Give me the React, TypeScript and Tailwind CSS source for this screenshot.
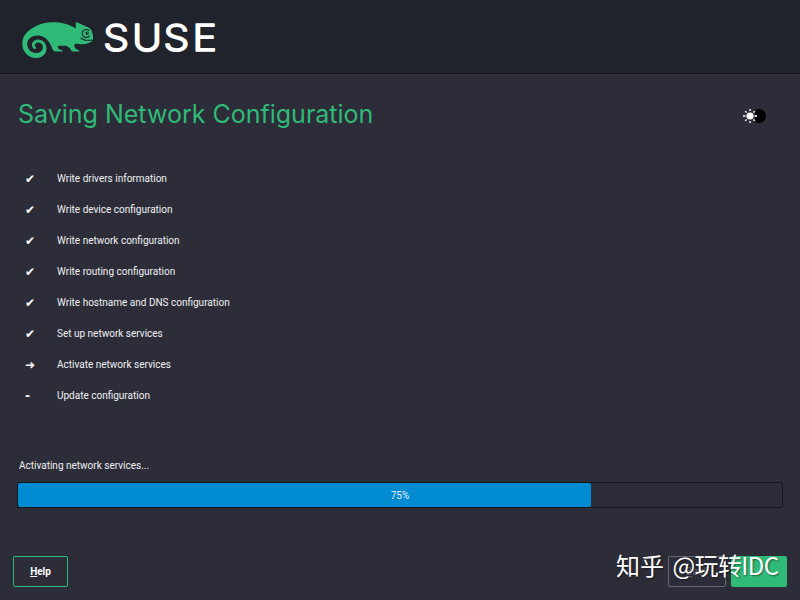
import { SiSuse } from "react-icons/si";

const steps = [
  { mark: "✔", label: "Write drivers information" },
  { mark: "✔", label: "Write device configuration" },
  { mark: "✔", label: "Write network configuration" },
  { mark: "✔", label: "Write routing configuration" },
  { mark: "✔", label: "Write hostname and DNS configuration" },
  { mark: "✔", label: "Set up network services" },
  { mark: "➜", label: "Activate network services" },
  { mark: "-", label: "Update configuration" },
];

function Logo() {
  return (
    <svg width="210" height="73" viewBox="22 0 210 73">
      <SiSuse x="22.2" y="4.5" size={71} color="#30ba78" />
      {/* Eye */}
      <circle cx="86.3" cy="33.4" r="5.2" fill="#30ba78" />
      <path
        d="M89.3 31a4 4 0 1 0 .2 4.6"
        fill="none"
        stroke="#21232c"
        strokeWidth="1.1"
      />
      <circle cx="87.1" cy="33.1" r="1.7" fill="#21232c" />
      <circle cx="87.7" cy="32.6" r="0.6" fill="#30ba78" />
      <text
        x="0 25.7 53.8 79.8"
        y="51.2"
        transform="translate(103.2 0) scale(1.12 1)"
        fill="#fff"
        stroke="#fff"
        strokeWidth="1.6"
        strokeLinejoin="round"
        className="font-['Inter',sans-serif] text-[36.5px] font-light"
      >
        SUSE
      </text>
    </svg>
  );
}

function ThemeToggle() {
  return (
    <svg width="26" height="18" viewBox="0 0 26 18">
      <circle cx="17" cy="9" r="7" fill="#000" />
      <circle cx="8" cy="9" r="6" fill="#2c2d38" />
      <circle cx="8" cy="9" r="3.6" fill="#fff" />
      <path
        d="M8 2v2M8 14v2M1 9h2.5M12.5 9h2.5M3.2 4.2l1.4 1.4M11.4 12.4l1.4 1.4M3.2 13.8l1.4-1.4M11.4 5.6l1.4-1.4"
        stroke="#fff"
        strokeWidth="1.4"
      />
    </svg>
  );
}

export default function App() {
  return (
    <div className="flex h-[600px] w-[800px] flex-col overflow-hidden bg-[#2c2d38] font-['Roboto',sans-serif] text-[10px] text-[#eff0f3]">
      <header className="flex h-[74px] items-start border-b border-[#15171f] bg-[#21232c] pl-[22px]">
        <Logo />
      </header>

      <main className="flex-1 px-[17px] pt-[22px]">
        <div className="flex h-[40px] items-center justify-between pr-[15px] pl-px">
          <h1 className="pb-[2px] font-['Inter',sans-serif] text-[25px] text-[#30ba78]">
            Saving Network Configuration
          </h1>
          <ThemeToggle />
        </div>

        <ul className="mt-[27px]">
          {steps.map((step) => (
            <li key={step.label} className="flex h-[31px] items-center pl-2">
              <span className="w-8 pt-px font-['DejaVu_Sans',sans-serif] text-[12px] font-bold text-white">
                {step.mark}
              </span>
              <span>{step.label}</span>
            </li>
          ))}
        </ul>

        <p className="mt-[47px] pl-[2px] leading-[15px]">Activating network services...</p>
        <div className="relative mt-[9px] flex h-[26px] w-[766px] rounded-xs border border-[#15171f]">
          <div className="w-3/4 rounded-xs bg-[#008bd2]" />
          <span className="absolute inset-0 flex items-center justify-center">75%</span>
        </div>
      </main>

      <footer className="relative flex h-[44px] items-start justify-between pr-[13px] pl-[13px]">
        <button className="h-[31px] w-[55px] rounded-xs border border-[#30ba78] font-bold text-white">
          <span className="underline">H</span>elp
        </button>
        <div className="flex gap-[5px]">
          <button className="h-[31px] w-[58px] rounded-xs border border-[#65666f] text-[#65666f]">
            <span className="underline">B</span>ack
          </button>
          <button className="h-[31px] w-[56px] rounded-xs bg-[#30ba78] text-[#45c287]">
            <span className="underline">N</span>ext
          </button>
        </div>
        {/* Watermark */}
        <span className="absolute top-[-9px] left-[616px] font-['Noto_Sans_CJK_SC',sans-serif] text-[24px] leading-[36px] whitespace-nowrap text-white [text-shadow:1px_1px_2px_rgba(0,0,0,0.5)] [word-spacing:3px]">
          知乎 <span className="tracking-[-0.6px]">@玩转IDC</span>
        </span>
      </footer>
    </div>
  );
}
